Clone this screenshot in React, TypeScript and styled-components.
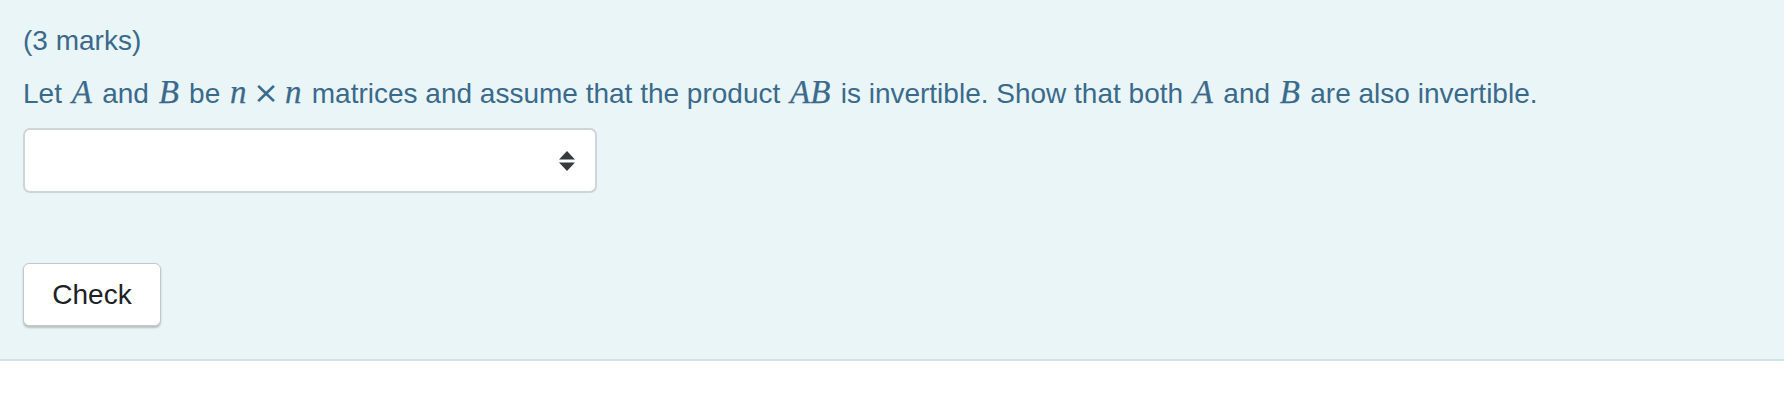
import React from "react";
import styled, { createGlobalStyle } from "styled-components";

const GlobalStyle = createGlobalStyle`
  body {
    margin: 0;
    background: #ffffff;
    font-family: "Liberation Sans", Arial, Helvetica, sans-serif;
  }
`;

const Formulation = styled.div`
  background: #eaf5f8;
  border-bottom: 2px solid #cbe3ea;
  padding: 20px 23px 33px;
  color: #3a6a8b;
  font-size: 28px;
  line-height: 41px;
`;

const Para = styled.p<{ gap?: number }>`
  margin: 0 0 ${({ gap }) => gap ?? 0}px;
  height: 41px;
  white-space: nowrap;
`;

// MathJax-like italic variables
const MathVar = styled.span`
  font-family: "Liberation Serif", "Times New Roman", serif;
  font-style: italic;
  font-size: 33px;
  line-height: 0;
  padding: 0 2.5px 0 2px;
  -webkit-text-stroke: 0.25px #3a6a8b;
`;

const MathOp = styled.span`
  font-family: "DejaVu Sans", sans-serif;
  font-size: 31px;
  line-height: 0;
  padding: 0 4px;
`;

const SelectBox = styled.div`
  box-sizing: border-box;
  width: 574px;
  height: 65px;
  margin-top: 14px;
  background: #ffffff;
  border: 2px solid #ced4da;
  border-radius: 7px;
  display: flex;
  align-items: center;
  justify-content: flex-end;
  padding-right: 20px;
  cursor: pointer;
`;

const CheckButton = styled.button`
  box-sizing: border-box;
  display: block;
  margin-top: 70px;
  width: 138px;
  height: 63px;
  background: #ffffff;
  border: 1px solid #c6c6c6;
  border-radius: 6px;
  box-shadow: 0 2px 2px rgba(0, 0, 0, 0.22);
  color: #1d2125;
  font-family: "Liberation Sans", Arial, sans-serif;
  font-size: 28px;
  padding: 0;
  cursor: pointer;
`;

const SortArrows = () => (
  <svg width="16" height="20" viewBox="0 0 16 20" aria-hidden="true">
    <path d="M8 0 L16 8.5 H0 Z" fill="#343a40" />
    <path d="M0 11.5 H16 L8 20 Z" fill="#343a40" />
  </svg>
);

const V = ({ children }: { children: React.ReactNode }) => <MathVar>{children}</MathVar>;

export default function App() {
  return (
    <>
      <GlobalStyle />
      <Formulation>
        <Para gap={12}>(3 marks)</Para>
        <Para>
          Let <V>A</V> and <V>B</V> be <V>n</V>
          <MathOp>×</MathOp>
          <V>n</V> matrices and assume that the product <V>AB</V> is invertible. Show
          that both <V>A</V> and <V>B</V> are also invertible.
        </Para>
        <SelectBox role="combobox" aria-expanded="false">
          <SortArrows />
        </SelectBox>
        <CheckButton type="button">Check</CheckButton>
      </Formulation>
    </>
  );
}
